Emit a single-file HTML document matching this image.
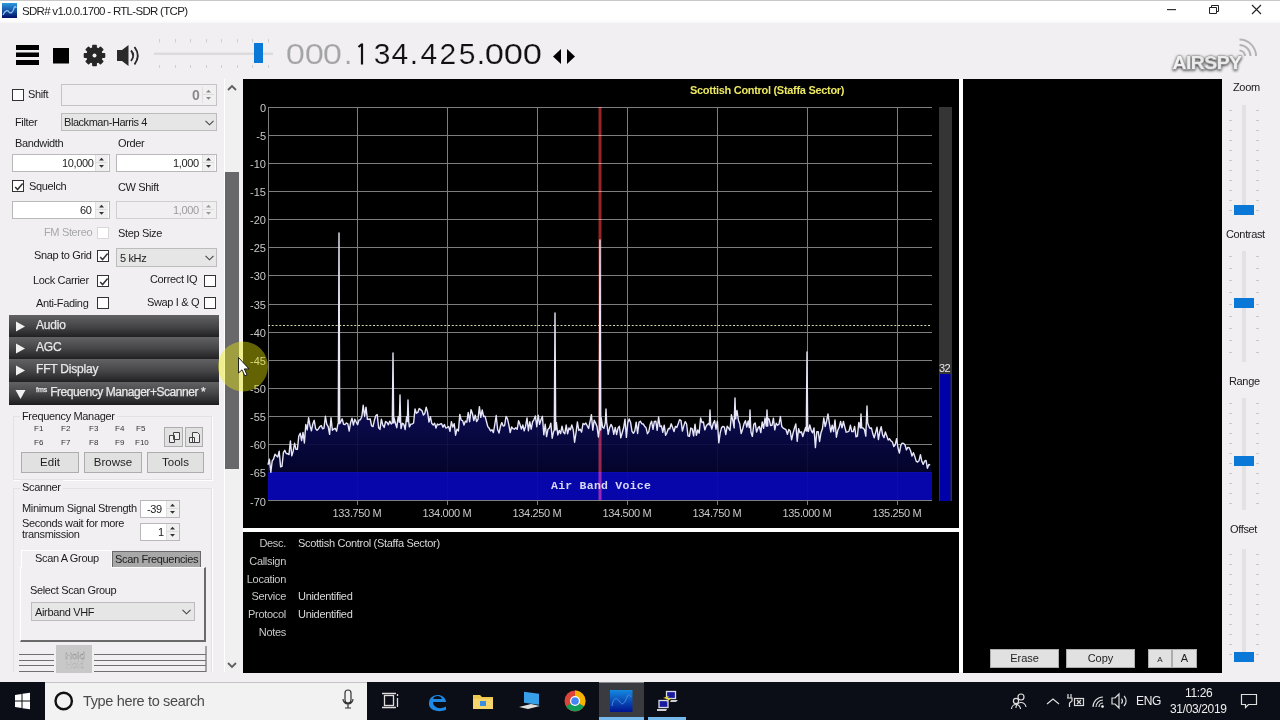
<!DOCTYPE html>
<html><head><meta charset="utf-8">
<style>
*{margin:0;padding:0;box-sizing:border-box}
body{will-change:transform}html,body{width:1280px;height:720px;overflow:hidden;background:#f1eff2;font-family:"Liberation Sans",sans-serif;color:#1e1e1e}
.a{position:absolute}
.t{position:absolute;white-space:nowrap;font-size:11px;line-height:14px;letter-spacing:-0.35px;color:#1c1c1c}
#titlebar{left:0;top:0;width:1280px;height:23px;background:linear-gradient(#fff 85%,#f7f6f8);border-top:1px solid #c9c9c9}
.blk{background:#000}
.chk{position:absolute;width:12px;height:12px;border:1px solid #333;background:#fff}
.num{position:absolute;background:#fff;border:1px solid #b9b9b9}
.combo{position:absolute;background:#e6e6e6;border:1px solid #bcbcbc}
.hdr{position:absolute;left:9px;width:210px;height:23px;background:linear-gradient(#626264,#454547 50%,#2a2a2c 85%,#1c1c1e);color:#e8e8e8;font-size:12px;font-weight:normal;letter-spacing:-0.2px;white-space:nowrap;-webkit-text-stroke:0.25px #e8e8e8}
.btn{position:absolute;background:#e1e1e1;border:1px solid #adadad;text-align:center;font-size:11.5px;line-height:19px}
.lbl{position:absolute;color:#c8c8c8;font-size:11.5px;white-space:nowrap}
</style></head><body>
<div id="titlebar" class="a"></div>
<div class="t" style="left:22px;top:4px;font-size:11.5px;letter-spacing:-0.7px;color:#222">SDR# v1.0.0.1700 - RTL-SDR (TCP)</div>


<!-- toolbar -->
<svg class="a" style="left:0;top:22px" width="600" height="56" viewBox="0 22 600 56">
 <rect x="16" y="45" width="23" height="5" fill="#000"/>
 <rect x="16" y="52.5" width="23" height="4.5" fill="#000"/>
 <rect x="16" y="60" width="23" height="5" fill="#000"/>
 <rect x="53" y="48" width="16" height="15.5" fill="#000"/>
 <g transform="translate(94.5,55.5)" fill="#262626">
  <circle r="8.3"/>
  <rect x="-2.4" y="-10.8" width="4.8" height="21.6" rx="0.8"/>
  <rect x="-2.4" y="-10.8" width="4.8" height="21.6" rx="0.8" transform="rotate(45)"/>
  <rect x="-2.4" y="-10.8" width="4.8" height="21.6" rx="0.8" transform="rotate(90)"/>
  <rect x="-2.4" y="-10.8" width="4.8" height="21.6" rx="0.8" transform="rotate(135)"/>
  <circle r="2" fill="#f1eff2"/>
 </g>
 <path d="M117,50 H122 L128.5,45 V66 L122,61 H117 Z" fill="#2a2a2a"/>
 <path d="M131,50.5 Q135.5,55.5 131,61" fill="none" stroke="#2a2a2a" stroke-width="1.9"/>
 <path d="M134.5,47 Q141,55.5 134.5,64.5" fill="none" stroke="#2a2a2a" stroke-width="1.9"/>
 <rect x="154" y="52.5" width="119" height="2.5" fill="#dcdcdc"/>
 <g stroke="#cfcfcf" stroke-width="1">
  <path d="M159.5,39V42.5 M175.5,39V42.5 M190.5,39V42.5 M206.5,39V42.5 M221.5,39V42.5 M237.5,39V42.5 M252.5,39V42.5 M268.5,39V42.5"/>
  <path d="M159.5,65V68 M175.5,65V68 M190.5,65V68 M206.5,65V68 M221.5,65V68 M237.5,65V68 M252.5,65V68 M268.5,65V68"/>
 </g>
 <rect x="254" y="43" width="9" height="20" fill="#0a78d6"/>
 <path d="M561,49 V64 L553,56.5 Z" fill="#000"/>
 <path d="M567,49 V64 L575,56.5 Z" fill="#000"/>
</svg>
<div class="a" style="left:0;top:0;font-family:'Liberation Sans';font-size:30px;line-height:34px;-webkit-text-stroke:0.2px #f1eff2"><span class="a" style="left:286.0px;top:37px;color:#a4a4a4;transform:scaleX(1.15);transform-origin:1px 0;">0</span><span class="a" style="left:304.6px;top:37px;color:#a4a4a4;transform:scaleX(1.15);transform-origin:1px 0;">0</span><span class="a" style="left:323.4px;top:37px;color:#a4a4a4;transform:scaleX(1.15);transform-origin:1px 0;">0</span><span class="a" style="left:343.9px;top:37px;color:#a4a4a4;">.</span><svg class="a" style="left:355px;top:42px" width="12" height="24"><path d="M7,1.5 V22.5 M7,2 L3.5,5" fill="none" stroke="#111" stroke-width="2.2"/></svg><span class="a" style="left:373.7px;top:37px;color:#111;">3</span><span class="a" style="left:391.5px;top:37px;color:#111;">4</span><span class="a" style="left:409.8px;top:37px;color:#111;">.</span><span class="a" style="left:420.6px;top:37px;color:#111;">4</span><span class="a" style="left:439.6px;top:37px;color:#111;">2</span><span class="a" style="left:458.7px;top:37px;color:#111;">5</span><span class="a" style="left:476.7px;top:37px;color:#111;">.</span><span class="a" style="left:485.0px;top:37px;color:#111;transform:scaleX(1.15);transform-origin:1px 0;">0</span><span class="a" style="left:504.0px;top:37px;color:#111;transform:scaleX(1.15);transform-origin:1px 0;">0</span><span class="a" style="left:522.8px;top:37px;color:#111;transform:scaleX(1.15);transform-origin:1px 0;">0</span></div>

<!-- left panel -->
<div class="chk" style="left:12px;top:89px"></div>
<div class="t" style="left:28px;top:87px">Shift</div>
<div class="num" style="left:61px;top:84px;width:156px;height:22px;background:#f1eff2;border-color:#c4c4c4"></div>
<div class="a" style="left:202px;top:87px;width:13px;height:16px;background:#f0f0f0;border-left:1px solid #e0e0e0"></div><svg class="a" style="left:202px;top:87px" width="13" height="16"><path d="M4,5.5 L6.5,2.8 L9,5.5Z M4,10 L6.5,12.7 L9,10Z" fill="#888"/><path d="M1,7.5H12" stroke="#dcdcdc" stroke-width="1"/></svg>
<div class="t" style="left:192px;top:87px;font-size:14px;line-height:16px;color:#8a8a8a;letter-spacing:0;font-weight:bold">0</div>
<div class="t" style="left:15px;top:115px">Filter</div>
<div class="combo" style="left:61px;top:113px;width:156px;height:18px"></div>
<svg class="a" style="left:205px;top:120px" width="9" height="6"><path d="M0.5,0.8 L4.5,4.8 L8.5,0.8" fill="none" stroke="#444" stroke-width="1.1"/></svg>
<div class="t" style="left:64px;top:115px;letter-spacing:-0.45px">Blackman-Harris 4</div>
<div class="t" style="left:15px;top:136px">Bandwidth</div>
<div class="t" style="left:118px;top:136px">Order</div>
<div class="num" style="left:12px;top:154px;width:98px;height:18px"></div>
<div class="a" style="left:95px;top:155px;width:13px;height:16px;background:#f0f0f0;border-left:1px solid #e0e0e0"></div><svg class="a" style="left:95px;top:155px" width="13" height="16"><path d="M4,5.5 L6.5,2.8 L9,5.5Z M4,10 L6.5,12.7 L9,10Z" fill="#333"/><path d="M1,7.5H12" stroke="#dcdcdc" stroke-width="1"/></svg>
<div class="t" style="left:62px;top:156px">10,000</div>
<div class="num" style="left:116px;top:154px;width:101px;height:18px"></div>
<div class="a" style="left:202px;top:155px;width:13px;height:16px;background:#f0f0f0;border-left:1px solid #e0e0e0"></div><svg class="a" style="left:202px;top:155px" width="13" height="16"><path d="M4,5.5 L6.5,2.8 L9,5.5Z M4,10 L6.5,12.7 L9,10Z" fill="#333"/><path d="M1,7.5H12" stroke="#dcdcdc" stroke-width="1"/></svg>
<div class="t" style="left:173px;top:156px">1,000</div>
<div class="chk" style="left:12px;top:180px"><svg width="12" height="12" class="a" style="left:0;top:0"><path d="M2.2,6 L4.6,8.6 L9.6,2.6" fill="none" stroke="#333" stroke-width="1.5"/></svg></div>
<div class="t" style="left:29px;top:179px">Squelch</div>
<div class="t" style="left:118px;top:180px">CW Shift</div>
<div class="num" style="left:12px;top:201px;width:98px;height:18px"></div>
<div class="a" style="left:95px;top:202px;width:13px;height:16px;background:#f0f0f0;border-left:1px solid #e0e0e0"></div><svg class="a" style="left:95px;top:202px" width="13" height="16"><path d="M4,5.5 L6.5,2.8 L9,5.5Z M4,10 L6.5,12.7 L9,10Z" fill="#333"/><path d="M1,7.5H12" stroke="#dcdcdc" stroke-width="1"/></svg>
<div class="t" style="left:80px;top:203px">60</div>
<div class="num" style="left:116px;top:201px;width:101px;height:18px;background:#f1eff2;border-color:#cfcfcf"></div>
<div class="a" style="left:202px;top:202px;width:13px;height:16px;background:#f0f0f0;border-left:1px solid #e0e0e0"></div><svg class="a" style="left:202px;top:202px" width="13" height="16"><path d="M4,5.5 L6.5,2.8 L9,5.5Z M4,10 L6.5,12.7 L9,10Z" fill="#999"/><path d="M1,7.5H12" stroke="#dcdcdc" stroke-width="1"/></svg>
<div class="t" style="left:173px;top:203px;color:#9c9c9c">1,000</div>
<div class="t" style="left:44px;top:225px;color:#a8a8a8">FM Stereo</div>
<div class="chk" style="left:97px;top:227px;border-color:#d8d8d8"></div>
<div class="t" style="left:118px;top:226px">Step Size</div>
<div class="t" style="left:34px;top:248px">Snap to Grid</div>
<div class="chk" style="left:97px;top:250px"><svg width="12" height="12" class="a" style="left:0;top:0"><path d="M2.2,6 L4.6,8.6 L9.6,2.6" fill="none" stroke="#333" stroke-width="1.5"/></svg></div>
<div class="combo" style="left:116px;top:248px;width:101px;height:19px"></div>
<svg class="a" style="left:205px;top:255px" width="9" height="6"><path d="M0.5,0.8 L4.5,4.8 L8.5,0.8" fill="none" stroke="#444" stroke-width="1.1"/></svg>
<div class="t" style="left:120px;top:251px">5 kHz</div>
<div class="t" style="left:33px;top:273px">Lock Carrier</div>
<div class="chk" style="left:97px;top:275px"><svg width="12" height="12" class="a" style="left:0;top:0"><path d="M2.2,6 L4.6,8.6 L9.6,2.6" fill="none" stroke="#333" stroke-width="1.5"/></svg></div>
<div class="t" style="left:150px;top:272px">Correct IQ</div>
<div class="chk" style="left:204px;top:275px"></div>
<div class="t" style="left:36px;top:296px">Anti-Fading</div>
<div class="chk" style="left:97px;top:297px"></div>
<div class="t" style="left:147px;top:295px">Swap I &amp; Q</div>
<div class="chk" style="left:204px;top:297px"></div>

<div class="hdr" style="top:315px"><svg class="a" style="left:6px;top:6px" width="12" height="12"><path d="M1,0.5 L10,5.5 L1,10.5Z" fill="#f0f0f0"/></svg><span class="a" style="left:27px;top:3px">Audio</span></div>
<div class="hdr" style="top:337px"><svg class="a" style="left:6px;top:6px" width="12" height="12"><path d="M1,0.5 L10,5.5 L1,10.5Z" fill="#f0f0f0"/></svg><span class="a" style="left:27px;top:3px">AGC</span></div>
<div class="hdr" style="top:359px;height:24px"><svg class="a" style="left:6px;top:6px" width="12" height="12"><path d="M1,0.5 L10,5.5 L1,10.5Z" fill="#f0f0f0"/></svg><span class="a" style="left:27px;top:3px">FFT Display</span></div>
<div class="hdr" style="top:382px"><svg class="a" style="left:6px;top:7px" width="12" height="12"><path d="M0.5,1 L10.5,1 L5.5,10Z" fill="#f0f0f0"/></svg><span class="a" style="left:27px;top:3px;letter-spacing:-0.45px"><span style="font-size:7px;vertical-align:4px;letter-spacing:0">fms</span> Frequency Manager+Scanner *</span></div>

<!-- scrollbar -->
<div class="a" style="left:224px;top:79px;width:16px;height:593px;background:#f0f0f0;border-left:1px solid #fff"></div>
<div class="a" style="left:225px;top:172px;width:14px;height:297px;background:#68676a"></div>
<svg class="a" style="left:224px;top:80px" width="16" height="593"><path d="M4,10 L8,6 L12,10" fill="none" stroke="#606060" stroke-width="1.8"/><path d="M4,583 L8,587 L12,583" fill="none" stroke="#606060" stroke-width="1.8"/></svg>

<!-- frequency manager group -->
<div class="a" style="left:13px;top:416px;width:199px;height:64px;border:1px solid #e2e2e2;box-shadow:1px 1px 0 #fff"></div>
<div class="t" style="left:20px;top:409px;background:#f1eff2;padding:0 2px">Frequency Manager</div>
<div class="a" style="font-size:8px;color:#333;left:0;top:0">
<span class="a" style="left:34px;top:424px">F1</span><span class="a" style="left:61px;top:424px">F2</span><span class="a" style="left:89px;top:424px">F3</span><span class="a" style="left:115px;top:424px">F4</span><span class="a" style="left:136px;top:424px">F5</span>
<span class="a" style="left:34px;top:438px">F6</span><span class="a" style="left:61px;top:438px">F7</span><span class="a" style="left:89px;top:438px">F8</span><span class="a" style="left:115px;top:438px">F9</span><span class="a" style="left:135px;top:438px">F10</span>
</div>
<div class="btn" style="left:164px;top:427px;width:19px;height:20px"><svg class="a" style="left:3px;top:3px" width="13" height="13"><path d="M5.5,1.5h6v7h-6z M1.5,4.5h5v7h-5z" fill="#eee" stroke="#444" stroke-width="1"/></svg></div>
<div class="btn" style="left:185px;top:427px;width:18px;height:20px"><svg class="a" style="left:2px;top:3px" width="13" height="13"><path d="M4.5,1.5h5l2,2v8h-7z M1.5,6.5h5v5h-5z" fill="#eee" stroke="#444" stroke-width="1"/></svg></div>
<div class="btn" style="left:21px;top:452px;width:58px;height:21px">Edit</div>
<div class="btn" style="left:84px;top:452px;width:58px;height:21px">Browse</div>
<div class="btn" style="left:147px;top:452px;width:57px;height:21px">Tools</div>
<div class="a" style="left:13px;top:488px;width:199px;height:184px;border:1px solid #e2e2e2;border-bottom:none;box-shadow:1px 0 0 #fff"></div>
<div class="t" style="left:20px;top:480px;background:#f1eff2;padding:0 2px">Scanner</div>
<div class="t" style="left:22px;top:501px">Minimum Signal Strength</div>
<div class="num" style="left:140px;top:500px;width:40px;height:18px"></div>
<div class="a" style="left:166px;top:501px;width:13px;height:16px;background:#f0f0f0;border-left:1px solid #e0e0e0"></div><svg class="a" style="left:166px;top:501px" width="13" height="16"><path d="M4,5.5 L6.5,2.8 L9,5.5Z M4,10 L6.5,12.7 L9,10Z" fill="#333"/><path d="M1,7.5H12" stroke="#dcdcdc" stroke-width="1"/></svg><div class="t" style="left:147px;top:502px">-39</div>
<div class="t" style="left:22px;top:518px;line-height:11px">Seconds wait for more<br>transmission</div>
<div class="num" style="left:140px;top:523px;width:40px;height:18px"></div>
<div class="a" style="left:166px;top:524px;width:13px;height:16px;background:#f0f0f0;border-left:1px solid #e0e0e0"></div><svg class="a" style="left:166px;top:524px" width="13" height="16"><path d="M4,5.5 L6.5,2.8 L9,5.5Z M4,10 L6.5,12.7 L9,10Z" fill="#333"/><path d="M1,7.5H12" stroke="#dcdcdc" stroke-width="1"/></svg><div class="t" style="left:158px;top:525px">1</div>
<div class="a" style="left:20px;top:567px;width:186px;height:75px;border:1px solid #fff;border-right:2px solid #6a6a6a;border-bottom:2px solid #6a6a6a"></div>
<div class="a" style="left:21px;top:550px;width:91px;height:18px;background:#f1eff2;border:1px solid #fff;border-bottom:none"></div>
<div class="t" style="left:35px;top:551px">Scan A Group</div>
<div class="a" style="left:112px;top:551px;width:89px;height:16px;background:#a8a8a8;border:1px solid #6a6a6a;border-bottom:none"></div>
<div class="t" style="left:115px;top:552px">Scan Frequencies</div>
<div class="t" style="left:30px;top:583px">Select Scan Group</div>
<div class="combo" style="left:31px;top:602px;width:164px;height:19px"></div>
<svg class="a" style="left:182px;top:609px" width="9" height="6"><path d="M0.5,0.8 L4.5,4.8 L8.5,0.8" fill="none" stroke="#444" stroke-width="1.1"/></svg><div class="t" style="left:35px;top:605px">Airband VHF</div>
<svg class="a" style="left:0;top:640px" width="224" height="40" viewBox="0 640 224 40">
 <g stroke="#707070" stroke-width="1.2">
 <path d="M19,654.5H54 M19,660.5H54 M19,665.5H54 M19,671.5H54"/>
 <path d="M94,654.5H206 M94,660.5H206 M94,665.5H206 M94,671.5H206"/>
 <path d="M206,646V672"/>
 </g>
 <rect x="56" y="645" width="36" height="28" fill="#c8c8c8"/>
 <text x="75" y="658.5" font-size="9.5" fill="#f2f2f2" stroke="#8c8c8c" stroke-width="0.45" text-anchor="middle" font-family="Liberation Sans">Hold</text><text x="75" y="667.5" font-size="9" fill="#e6e6e6" stroke="#9a9a9a" stroke-width="0.3" text-anchor="middle" font-family="Liberation Sans" opacity="0.7">Hold</text>
</svg>

<!-- panels -->
<div class="a blk" style="left:243px;top:79px;width:716px;height:449px"></div>
<div class="a" style="left:959px;top:79px;width:4px;height:593px;background:#fff"></div>
<div class="a" style="left:243px;top:528px;width:716px;height:4px;background:#fff"></div>
<div class="a blk" style="left:243px;top:532px;width:716px;height:141px"></div>
<div class="a blk" style="left:963px;top:79px;width:259px;height:594px"></div>

<!-- spectrum svg -->
<svg class="a" style="left:0;top:0" width="1280" height="720" viewBox="0 0 1280 720">
 <defs><linearGradient id="fg" x1="0" y1="400" x2="0" y2="472" gradientUnits="userSpaceOnUse"><stop offset="0" stop-color="#0e0e60"/><stop offset="1" stop-color="#04042e"/></linearGradient></defs>
 <g stroke="#7e7e7e" stroke-width="1" shape-rendering="crispEdges">
  <path d="M268,107.5H932 M268,135.5H932 M268,163.5H932 M268,191.5H932 M268,219.5H932 M268,247.5H932 M268,275.5H932 M268,304.5H932 M268,332.5H932 M268,360.5H932 M268,388.5H932 M268,416.5H932 M268,444.5H932 M268,472.5H932 M268,500.5H932"/>
  <path d="M268.5,107V500 M357.5,107V505 M447.5,107V505 M537.5,107V505 M627.5,107V505 M717.5,107V505 M807.5,107V505 M897.5,107V505"/>
 </g>
 <path d="M268,472 L268.0,464.7 L269.4,459.3 L270.8,472.3 L272.2,461.0 L273.6,458.8 L275.0,454.2 L276.4,455.7 L277.8,457.0 L279.2,451.2 L280.6,466.9 L282.0,466.4 L283.4,452.5 L284.8,450.3 L286.2,453.6 L287.6,453.7 L289.0,454.6 L290.4,441.0 L291.8,455.9 L293.2,451.0 L294.6,443.3 L296.0,449.3 L297.4,449.4 L298.8,436.0 L300.2,433.2 L301.6,440.6 L303.0,432.4 L304.4,443.0 L305.8,424.4 L307.2,429.8 L308.6,417.6 L310.0,425.6 L311.4,430.9 L312.8,424.0 L314.2,420.3 L315.6,428.6 L317.0,430.3 L318.4,428.9 L319.8,426.6 L321.2,425.6 L322.6,428.8 L324.0,428.1 L325.4,416.3 L326.8,424.3 L328.2,426.7 L329.6,434.4 L331.0,417.7 L332.4,430.3 L333.8,429.0 L335.2,428.3 L336.6,431.2 L338.0,423.7 L338.3,423.8 L339.0,233.0 L339.7,423.8 L340.8,421.7 L342.2,418.8 L343.6,424.3 L345.0,424.6 L346.4,423.0 L347.8,423.8 L349.2,431.0 L350.6,422.6 L352.0,418.1 L353.4,425.1 L354.8,419.3 L356.2,422.0 L357.6,424.7 L359.0,419.9 L360.4,419.7 L361.8,416.8 L363.2,405.3 L364.6,416.5 L366.0,407.2 L367.4,419.4 L368.8,419.2 L370.2,419.0 L371.6,425.9 L373.0,426.6 L374.4,420.3 L375.8,415.8 L377.2,414.6 L378.6,427.8 L380.0,429.4 L381.4,419.2 L382.8,425.1 L384.2,427.4 L385.6,421.5 L387.0,422.4 L388.4,424.8 L389.8,421.1 L391.2,424.0 L392.3,422.9 L393.0,353.0 L393.7,422.9 L394.0,417.6 L395.4,423.3 L396.8,427.7 L398.2,416.5 L399.3,422.2 L400.0,395.0 L400.7,422.2 L401.0,428.5 L402.4,423.3 L403.8,424.1 L405.2,429.5 L406.6,416.8 L407.3,421.5 L408.0,400.0 L408.7,421.5 L409.4,426.9 L410.8,424.1 L412.2,424.0 L413.6,423.0 L415.0,409.0 L416.4,413.2 L417.8,412.4 L419.2,408.5 L420.6,409.6 L422.0,410.8 L423.4,415.0 L424.8,413.5 L426.2,407.1 L427.6,412.4 L429.0,422.1 L430.4,416.7 L431.8,423.6 L433.2,425.1 L434.6,423.2 L436.0,428.0 L437.4,424.0 L438.8,424.9 L440.2,424.0 L441.6,423.8 L443.0,427.2 L444.4,424.6 L445.8,428.0 L447.2,427.6 L448.6,426.5 L450.0,431.3 L451.4,421.7 L452.8,427.0 L454.2,423.7 L455.6,435.2 L457.0,429.1 L458.4,430.9 L459.8,414.4 L461.2,420.1 L462.6,420.6 L464.0,425.0 L465.4,421.1 L466.8,422.1 L468.2,412.5 L469.6,421.7 L471.0,409.6 L472.4,413.4 L473.8,420.6 L475.2,415.1 L476.6,421.5 L478.0,419.4 L479.4,406.7 L480.8,417.3 L482.2,410.0 L483.6,416.5 L485.0,416.1 L486.4,421.2 L487.8,426.6 L489.2,428.3 L490.6,430.9 L492.0,429.7 L493.4,432.6 L494.8,424.4 L496.2,415.5 L497.6,429.6 L499.0,433.0 L500.4,426.6 L501.8,422.6 L503.2,426.0 L504.6,425.6 L506.0,416.5 L507.4,418.7 L508.8,424.7 L510.2,432.6 L511.6,427.0 L513.0,428.7 L514.4,429.2 L515.8,427.7 L517.2,429.3 L518.6,420.7 L520.0,424.6 L521.4,429.1 L522.8,425.0 L524.2,430.8 L525.6,426.2 L527.0,417.9 L528.4,430.7 L529.8,421.8 L531.2,429.2 L532.6,421.9 L534.0,419.6 L535.4,416.0 L536.8,426.7 L538.2,415.1 L539.6,424.3 L541.0,419.8 L542.4,416.3 L543.8,434.8 L545.2,424.3 L546.6,436.6 L548.0,429.2 L549.4,427.9 L550.8,423.1 L552.2,438.2 L553.6,431.6 L554.3,430.0 L555.0,313.0 L555.7,430.0 L556.4,422.7 L557.8,435.0 L559.2,430.4 L560.6,433.6 L562.0,426.2 L563.4,432.3 L564.8,433.8 L566.2,425.0 L567.6,433.9 L569.0,428.0 L570.4,429.8 L571.8,424.9 L573.2,429.6 L574.6,442.2 L576.0,432.8 L577.4,421.9 L578.8,430.5 L580.2,429.3 L581.6,432.1 L583.0,423.5 L584.4,424.5 L585.8,423.1 L587.2,425.8 L588.6,428.5 L590.0,421.6 L591.4,414.6 L592.8,430.1 L594.2,420.2 L595.6,423.0 L597.0,426.6 L598.4,437.0 L599.3,430.0 L600.0,240.0 L600.7,430.0 L601.2,417.7 L602.6,427.1 L604.0,428.2 L605.3,423.0 L606.0,409.0 L606.7,423.0 L606.8,422.9 L608.2,434.3 L609.6,427.8 L611.0,424.4 L612.4,427.1 L613.8,434.4 L615.2,427.4 L616.6,434.5 L618.0,428.1 L619.4,426.3 L620.8,437.8 L622.2,432.9 L623.6,428.0 L625.0,419.1 L626.4,437.4 L627.8,422.6 L629.2,419.0 L630.6,422.6 L632.0,431.3 L633.4,433.3 L634.8,430.8 L636.2,422.2 L637.6,433.5 L639.0,422.4 L640.4,421.3 L641.8,423.7 L643.2,424.0 L644.6,426.2 L646.0,427.7 L647.4,433.7 L648.8,431.6 L650.2,424.3 L651.6,421.3 L653.0,429.4 L654.4,421.4 L655.8,421.2 L657.2,430.3 L658.6,416.9 L660.0,426.6 L661.4,425.9 L662.8,432.3 L664.2,425.2 L665.6,435.3 L667.0,432.6 L668.4,428.5 L669.8,428.8 L671.2,423.8 L672.6,427.6 L674.0,431.5 L675.4,426.4 L676.8,427.5 L678.2,423.8 L679.6,419.6 L681.0,420.6 L682.4,431.1 L683.8,425.9 L685.2,421.6 L686.6,424.0 L688.0,435.9 L689.4,436.3 L690.8,428.0 L692.2,428.8 L693.6,435.9 L695.0,424.2 L696.4,435.3 L697.8,430.0 L699.2,433.1 L700.6,417.9 L702.0,422.5 L703.4,421.9 L704.8,429.9 L706.2,426.0 L707.6,424.2 L709.0,423.2 L709.3,425.0 L710.0,410.0 L710.7,425.0 L711.8,429.0 L713.2,423.5 L714.6,420.6 L716.0,429.2 L717.4,421.2 L718.8,442.8 L720.2,432.9 L721.6,427.6 L723.0,426.4 L724.4,427.2 L725.8,434.5 L727.2,426.1 L728.6,428.2 L730.0,430.4 L731.4,414.8 L732.8,420.3 L734.2,427.9 L734.3,419.0 L735.0,398.0 L735.7,419.0 L737.0,410.5 L738.4,420.2 L739.8,424.0 L741.2,433.6 L742.6,429.3 L744.0,423.8 L745.4,420.7 L746.8,427.1 L748.2,421.0 L749.3,427.6 L750.0,410.0 L750.7,427.6 L751.0,432.3 L752.4,436.4 L753.8,424.3 L755.2,423.0 L756.6,432.1 L758.0,428.1 L759.4,426.6 L760.8,432.6 L762.2,422.0 L763.6,428.3 L765.0,418.0 L766.3,426.1 L767.0,410.0 L767.7,426.1 L767.8,418.0 L769.2,419.3 L770.6,425.6 L772.0,425.3 L773.4,418.1 L774.8,429.8 L776.2,423.3 L777.6,425.2 L779.0,424.2 L780.4,416.5 L781.8,426.6 L783.2,428.1 L784.6,428.9 L786.0,429.7 L787.4,434.3 L788.8,429.5 L790.2,431.0 L791.6,439.9 L793.0,433.4 L794.4,428.2 L795.8,423.9 L797.2,441.3 L798.6,428.6 L800.0,432.8 L801.4,431.8 L802.8,436.5 L804.2,431.7 L805.6,427.5 L806.3,431.0 L807.0,352.0 L807.7,431.0 L808.4,431.4 L809.8,425.0 L811.2,430.4 L812.6,432.8 L814.0,427.9 L815.4,447.6 L816.8,431.8 L818.2,431.6 L819.6,441.5 L821.0,432.7 L822.4,428.8 L823.8,418.0 L825.2,426.6 L826.6,421.0 L828.0,414.0 L829.4,423.5 L830.8,432.0 L832.2,425.2 L833.6,431.6 L835.0,420.0 L836.4,437.2 L837.8,430.3 L839.2,427.3 L840.6,421.4 L842.0,427.9 L843.4,421.5 L844.8,427.1 L846.2,432.2 L847.6,431.8 L849.0,431.2 L850.4,425.3 L851.8,431.6 L853.2,431.6 L854.6,426.4 L856.0,436.9 L857.4,436.1 L858.8,422.5 L860.2,427.8 L860.3,427.9 L861.0,414.0 L861.7,427.9 L863.0,428.0 L864.4,429.4 L865.8,436.1 L866.3,423.0 L867.0,406.0 L867.7,423.0 L868.6,425.6 L870.0,428.5 L871.4,427.9 L872.8,433.8 L874.2,437.8 L875.6,432.6 L877.0,427.2 L878.4,439.5 L879.8,431.8 L881.2,426.6 L882.6,434.9 L884.0,437.7 L885.4,431.9 L886.8,436.0 L888.2,440.1 L889.6,438.8 L891.0,441.0 L892.4,442.0 L893.8,446.6 L895.2,444.8 L896.6,438.6 L898.0,448.0 L899.4,453.1 L900.8,445.3 L902.2,443.1 L903.6,443.4 L905.0,444.7 L906.4,449.9 L907.8,447.4 L909.2,447.7 L910.6,450.7 L912.0,456.0 L913.4,452.7 L914.8,456.6 L916.2,461.1 L917.6,462.1 L919.0,460.8 L920.4,454.6 L921.8,461.3 L923.2,464.4 L924.6,461.2 L926.0,460.4 L927.4,468.2 L928.8,464.5 L930.2,465.1 L931.5,472 Z" fill="url(#fg)" fill-opacity="0.92"/>
 <rect x="268" y="472" width="664" height="28" fill="#0606b2" fill-opacity="0.96"/>
 <path d="M268,325.5H930" stroke="#d4d4a8" stroke-width="1.2" stroke-dasharray="2,1.75"/>
 <rect x="598.5" y="107" width="3" height="393" fill="rgb(150,36,36)" style="mix-blend-mode:screen"/>
 <path d="M268.0,464.7 L269.4,459.3 L270.8,472.3 L272.2,461.0 L273.6,458.8 L275.0,454.2 L276.4,455.7 L277.8,457.0 L279.2,451.2 L280.6,466.9 L282.0,466.4 L283.4,452.5 L284.8,450.3 L286.2,453.6 L287.6,453.7 L289.0,454.6 L290.4,441.0 L291.8,455.9 L293.2,451.0 L294.6,443.3 L296.0,449.3 L297.4,449.4 L298.8,436.0 L300.2,433.2 L301.6,440.6 L303.0,432.4 L304.4,443.0 L305.8,424.4 L307.2,429.8 L308.6,417.6 L310.0,425.6 L311.4,430.9 L312.8,424.0 L314.2,420.3 L315.6,428.6 L317.0,430.3 L318.4,428.9 L319.8,426.6 L321.2,425.6 L322.6,428.8 L324.0,428.1 L325.4,416.3 L326.8,424.3 L328.2,426.7 L329.6,434.4 L331.0,417.7 L332.4,430.3 L333.8,429.0 L335.2,428.3 L336.6,431.2 L338.0,423.7 L338.3,423.8 L339.0,233.0 L339.7,423.8 L340.8,421.7 L342.2,418.8 L343.6,424.3 L345.0,424.6 L346.4,423.0 L347.8,423.8 L349.2,431.0 L350.6,422.6 L352.0,418.1 L353.4,425.1 L354.8,419.3 L356.2,422.0 L357.6,424.7 L359.0,419.9 L360.4,419.7 L361.8,416.8 L363.2,405.3 L364.6,416.5 L366.0,407.2 L367.4,419.4 L368.8,419.2 L370.2,419.0 L371.6,425.9 L373.0,426.6 L374.4,420.3 L375.8,415.8 L377.2,414.6 L378.6,427.8 L380.0,429.4 L381.4,419.2 L382.8,425.1 L384.2,427.4 L385.6,421.5 L387.0,422.4 L388.4,424.8 L389.8,421.1 L391.2,424.0 L392.3,422.9 L393.0,353.0 L393.7,422.9 L394.0,417.6 L395.4,423.3 L396.8,427.7 L398.2,416.5 L399.3,422.2 L400.0,395.0 L400.7,422.2 L401.0,428.5 L402.4,423.3 L403.8,424.1 L405.2,429.5 L406.6,416.8 L407.3,421.5 L408.0,400.0 L408.7,421.5 L409.4,426.9 L410.8,424.1 L412.2,424.0 L413.6,423.0 L415.0,409.0 L416.4,413.2 L417.8,412.4 L419.2,408.5 L420.6,409.6 L422.0,410.8 L423.4,415.0 L424.8,413.5 L426.2,407.1 L427.6,412.4 L429.0,422.1 L430.4,416.7 L431.8,423.6 L433.2,425.1 L434.6,423.2 L436.0,428.0 L437.4,424.0 L438.8,424.9 L440.2,424.0 L441.6,423.8 L443.0,427.2 L444.4,424.6 L445.8,428.0 L447.2,427.6 L448.6,426.5 L450.0,431.3 L451.4,421.7 L452.8,427.0 L454.2,423.7 L455.6,435.2 L457.0,429.1 L458.4,430.9 L459.8,414.4 L461.2,420.1 L462.6,420.6 L464.0,425.0 L465.4,421.1 L466.8,422.1 L468.2,412.5 L469.6,421.7 L471.0,409.6 L472.4,413.4 L473.8,420.6 L475.2,415.1 L476.6,421.5 L478.0,419.4 L479.4,406.7 L480.8,417.3 L482.2,410.0 L483.6,416.5 L485.0,416.1 L486.4,421.2 L487.8,426.6 L489.2,428.3 L490.6,430.9 L492.0,429.7 L493.4,432.6 L494.8,424.4 L496.2,415.5 L497.6,429.6 L499.0,433.0 L500.4,426.6 L501.8,422.6 L503.2,426.0 L504.6,425.6 L506.0,416.5 L507.4,418.7 L508.8,424.7 L510.2,432.6 L511.6,427.0 L513.0,428.7 L514.4,429.2 L515.8,427.7 L517.2,429.3 L518.6,420.7 L520.0,424.6 L521.4,429.1 L522.8,425.0 L524.2,430.8 L525.6,426.2 L527.0,417.9 L528.4,430.7 L529.8,421.8 L531.2,429.2 L532.6,421.9 L534.0,419.6 L535.4,416.0 L536.8,426.7 L538.2,415.1 L539.6,424.3 L541.0,419.8 L542.4,416.3 L543.8,434.8 L545.2,424.3 L546.6,436.6 L548.0,429.2 L549.4,427.9 L550.8,423.1 L552.2,438.2 L553.6,431.6 L554.3,430.0 L555.0,313.0 L555.7,430.0 L556.4,422.7 L557.8,435.0 L559.2,430.4 L560.6,433.6 L562.0,426.2 L563.4,432.3 L564.8,433.8 L566.2,425.0 L567.6,433.9 L569.0,428.0 L570.4,429.8 L571.8,424.9 L573.2,429.6 L574.6,442.2 L576.0,432.8 L577.4,421.9 L578.8,430.5 L580.2,429.3 L581.6,432.1 L583.0,423.5 L584.4,424.5 L585.8,423.1 L587.2,425.8 L588.6,428.5 L590.0,421.6 L591.4,414.6 L592.8,430.1 L594.2,420.2 L595.6,423.0 L597.0,426.6 L598.4,437.0 L599.3,430.0 L600.0,240.0 L600.7,430.0 L601.2,417.7 L602.6,427.1 L604.0,428.2 L605.3,423.0 L606.0,409.0 L606.7,423.0 L606.8,422.9 L608.2,434.3 L609.6,427.8 L611.0,424.4 L612.4,427.1 L613.8,434.4 L615.2,427.4 L616.6,434.5 L618.0,428.1 L619.4,426.3 L620.8,437.8 L622.2,432.9 L623.6,428.0 L625.0,419.1 L626.4,437.4 L627.8,422.6 L629.2,419.0 L630.6,422.6 L632.0,431.3 L633.4,433.3 L634.8,430.8 L636.2,422.2 L637.6,433.5 L639.0,422.4 L640.4,421.3 L641.8,423.7 L643.2,424.0 L644.6,426.2 L646.0,427.7 L647.4,433.7 L648.8,431.6 L650.2,424.3 L651.6,421.3 L653.0,429.4 L654.4,421.4 L655.8,421.2 L657.2,430.3 L658.6,416.9 L660.0,426.6 L661.4,425.9 L662.8,432.3 L664.2,425.2 L665.6,435.3 L667.0,432.6 L668.4,428.5 L669.8,428.8 L671.2,423.8 L672.6,427.6 L674.0,431.5 L675.4,426.4 L676.8,427.5 L678.2,423.8 L679.6,419.6 L681.0,420.6 L682.4,431.1 L683.8,425.9 L685.2,421.6 L686.6,424.0 L688.0,435.9 L689.4,436.3 L690.8,428.0 L692.2,428.8 L693.6,435.9 L695.0,424.2 L696.4,435.3 L697.8,430.0 L699.2,433.1 L700.6,417.9 L702.0,422.5 L703.4,421.9 L704.8,429.9 L706.2,426.0 L707.6,424.2 L709.0,423.2 L709.3,425.0 L710.0,410.0 L710.7,425.0 L711.8,429.0 L713.2,423.5 L714.6,420.6 L716.0,429.2 L717.4,421.2 L718.8,442.8 L720.2,432.9 L721.6,427.6 L723.0,426.4 L724.4,427.2 L725.8,434.5 L727.2,426.1 L728.6,428.2 L730.0,430.4 L731.4,414.8 L732.8,420.3 L734.2,427.9 L734.3,419.0 L735.0,398.0 L735.7,419.0 L737.0,410.5 L738.4,420.2 L739.8,424.0 L741.2,433.6 L742.6,429.3 L744.0,423.8 L745.4,420.7 L746.8,427.1 L748.2,421.0 L749.3,427.6 L750.0,410.0 L750.7,427.6 L751.0,432.3 L752.4,436.4 L753.8,424.3 L755.2,423.0 L756.6,432.1 L758.0,428.1 L759.4,426.6 L760.8,432.6 L762.2,422.0 L763.6,428.3 L765.0,418.0 L766.3,426.1 L767.0,410.0 L767.7,426.1 L767.8,418.0 L769.2,419.3 L770.6,425.6 L772.0,425.3 L773.4,418.1 L774.8,429.8 L776.2,423.3 L777.6,425.2 L779.0,424.2 L780.4,416.5 L781.8,426.6 L783.2,428.1 L784.6,428.9 L786.0,429.7 L787.4,434.3 L788.8,429.5 L790.2,431.0 L791.6,439.9 L793.0,433.4 L794.4,428.2 L795.8,423.9 L797.2,441.3 L798.6,428.6 L800.0,432.8 L801.4,431.8 L802.8,436.5 L804.2,431.7 L805.6,427.5 L806.3,431.0 L807.0,352.0 L807.7,431.0 L808.4,431.4 L809.8,425.0 L811.2,430.4 L812.6,432.8 L814.0,427.9 L815.4,447.6 L816.8,431.8 L818.2,431.6 L819.6,441.5 L821.0,432.7 L822.4,428.8 L823.8,418.0 L825.2,426.6 L826.6,421.0 L828.0,414.0 L829.4,423.5 L830.8,432.0 L832.2,425.2 L833.6,431.6 L835.0,420.0 L836.4,437.2 L837.8,430.3 L839.2,427.3 L840.6,421.4 L842.0,427.9 L843.4,421.5 L844.8,427.1 L846.2,432.2 L847.6,431.8 L849.0,431.2 L850.4,425.3 L851.8,431.6 L853.2,431.6 L854.6,426.4 L856.0,436.9 L857.4,436.1 L858.8,422.5 L860.2,427.8 L860.3,427.9 L861.0,414.0 L861.7,427.9 L863.0,428.0 L864.4,429.4 L865.8,436.1 L866.3,423.0 L867.0,406.0 L867.7,423.0 L868.6,425.6 L870.0,428.5 L871.4,427.9 L872.8,433.8 L874.2,437.8 L875.6,432.6 L877.0,427.2 L878.4,439.5 L879.8,431.8 L881.2,426.6 L882.6,434.9 L884.0,437.7 L885.4,431.9 L886.8,436.0 L888.2,440.1 L889.6,438.8 L891.0,441.0 L892.4,442.0 L893.8,446.6 L895.2,444.8 L896.6,438.6 L898.0,448.0 L899.4,453.1 L900.8,445.3 L902.2,443.1 L903.6,443.4 L905.0,444.7 L906.4,449.9 L907.8,447.4 L909.2,447.7 L910.6,450.7 L912.0,456.0 L913.4,452.7 L914.8,456.6 L916.2,461.1 L917.6,462.1 L919.0,460.8 L920.4,454.6 L921.8,461.3 L923.2,464.4 L924.6,461.2 L926.0,460.4 L927.4,468.2 L928.8,464.5 L930.2,465.1" fill="none" stroke="#e6e6f8" stroke-width="1.4" stroke-linejoin="round"/>
  <rect x="939" y="107" width="13" height="394" fill="#353535"/>
 <rect x="940" y="374" width="10.5" height="127" fill="#0000a8"/>
</svg>
<div class="t" style="left:690px;top:83px;color:#ece860;font-weight:bold;font-size:11px;letter-spacing:-0.3px">Scottish Control (Staffa Sector)</div>
<div class="t" style="left:551px;top:479px;color:#d8d8f4;font-family:'Liberation Mono',monospace;font-weight:bold;font-size:11.5px;letter-spacing:0.25px">Air Band Voice</div>
<div class="t" style="left:939px;top:361px;color:#e8e8e8;font-size:11px;letter-spacing:-0.5px">32</div>

<!-- dB labels -->
<div class="a" style="left:243px;top:0;width:23px;font-size:11px;color:#c8c8c8;text-align:right">
<div class="a" style="right:0;top:102px">0</div>
<div class="a" style="right:0;top:130px">-5</div>
<div class="a" style="right:0;top:158px">-10</div>
<div class="a" style="right:0;top:186px">-15</div>
<div class="a" style="right:0;top:214px">-20</div>
<div class="a" style="right:0;top:242px">-25</div>
<div class="a" style="right:0;top:270px">-30</div>
<div class="a" style="right:0;top:299px">-35</div>
<div class="a" style="right:0;top:327px">-40</div>
<div class="a" style="right:0;top:355px">-45</div>
<div class="a" style="right:0;top:383px">-50</div>
<div class="a" style="right:0;top:411px">-55</div>
<div class="a" style="right:0;top:439px">-60</div>
<div class="a" style="right:0;top:467px">-65</div>
<div class="a" style="right:0;top:496px">-70</div>
</div>
<div class="a" style="left:0;top:507px;font-size:11px;color:#c8c8c8;letter-spacing:-0.35px">
<div class="a" style="left:317px;width:80px;text-align:center">133.750 M</div>
<div class="a" style="left:407px;width:80px;text-align:center">134.000 M</div>
<div class="a" style="left:497px;width:80px;text-align:center">134.250 M</div>
<div class="a" style="left:587px;width:80px;text-align:center">134.500 M</div>
<div class="a" style="left:677px;width:80px;text-align:center">134.750 M</div>
<div class="a" style="left:767px;width:80px;text-align:center">135.000 M</div>
<div class="a" style="left:857px;width:80px;text-align:center">135.250 M</div>
</div>
<!-- info panel -->
<div class="a" style="left:243px;top:535px;width:43px;font-size:11px;color:#c8c8c8;text-align:right;line-height:17.8px;letter-spacing:-0.3px">Desc.<br>Callsign<br>Location<br>Service<br>Protocol<br>Notes</div>
<div class="a" style="left:298px;top:535px;font-size:11px;color:#d8d8d8;line-height:17.8px;white-space:nowrap;letter-spacing:-0.3px">Scottish Control (Staffa Sector)<br>&nbsp;<br>&nbsp;<br>Unidentified<br>Unidentified</div>

<!-- cursor highlight -->
<svg class="a" style="left:200px;top:320px" width="100" height="100" viewBox="200 320 100 100">
 <circle cx="243" cy="366.5" r="25" fill="rgb(235,235,10)" fill-opacity="0.42"/>
 <path d="M238.5,357.5 V373 L242,369.8 L244.8,375.8 L247,374.8 L244.3,368.9 H249 Z" fill="#fff" stroke="#111" stroke-width="0.9" stroke-linejoin="round"/>
</svg>
<!-- window controls -->
<svg class="a" style="left:1150px;top:0" width="130" height="22" viewBox="1150 0 130 22">
 <rect x="1167" y="9" width="9" height="1.2" fill="#333"/>
 <path d="M1209.5,7.5h7v6h-7z M1211.5,7.5V5.5h7v6h-2" fill="none" stroke="#222" stroke-width="1"/>
 <path d="M1252,5 L1261,14 M1261,5 L1252,14" stroke="#222" stroke-width="1.1"/>
</svg>
<!-- app icon -->
<svg class="a" style="left:2px;top:3px" width="15" height="15" viewBox="0 0 15 15">
 <defs><linearGradient id="ig" x1="0" y1="0" x2="0" y2="1"><stop offset="0" stop-color="#2a9ae0"/><stop offset="1" stop-color="#00106a"/></linearGradient></defs>
 <rect width="15" height="15" fill="url(#ig)"/>
 <path d="M1,12 C3,7 6,7 7,9 C8,11 11,10 12,5 C12.5,3 14,3 14,5" fill="none" stroke="#9cc8f4" stroke-width="1.2"/>
</svg>
<!-- AIRSPY logo -->
<svg class="a" style="left:1160px;top:30px" width="110" height="50" viewBox="1160 30 110 50">
 <defs>
  <filter id="sh" x="-20%" y="-40%" width="140%" height="180%"><feGaussianBlur in="SourceAlpha" stdDeviation="1.6"/><feOffset dx="0" dy="0.5"/><feComponentTransfer><feFuncA type="linear" slope="0.9"/></feComponentTransfer><feMerge><feMergeNode/><feMergeNode in="SourceGraphic"/></feMerge></filter>
  <linearGradient id="lg" x1="0" y1="0" x2="1" y2="0"><stop offset="0" stop-color="#f4f4f4"/><stop offset="0.5" stop-color="#e6e6e6"/><stop offset="1" stop-color="#f2f2f2"/></linearGradient>
 </defs>
 <g fill="none" stroke="#b4b4b6" stroke-width="2">
   <path d="M1239.5,50.5 A5.5,5.5 0 0 1 1245,56"/>
   <path d="M1239.5,45 A11,11 0 0 1 1250.5,56"/>
   <path d="M1239.5,39.5 A16.5,16.5 0 0 1 1256,56"/>
 </g>
 <g filter="url(#sh)">

  <text x="1172.5" y="68.5" font-family="Liberation Sans" font-weight="bold" font-size="19" fill="url(#lg)" stroke="#9a9a9a" stroke-width="0.9" paint-order="stroke" letter-spacing="-0.5" textLength="69" lengthAdjust="spacingAndGlyphs">AIRSPY</text>
 </g>
</svg>
<!-- right slider column -->
<div class="t" style="left:1233px;top:80px;font-size:11px">Zoom</div>
<div class="t" style="left:1226px;top:227px;font-size:11px">Contrast</div>
<div class="t" style="left:1229px;top:374px;font-size:11px">Range</div>
<div class="t" style="left:1230px;top:522px;font-size:11px">Offset</div>
<svg class="a" style="left:1222px;top:79px" width="58" height="600" viewBox="1222 79 58 600">
 <g fill="#e2e2e2">
  <rect x="1242" y="105" width="4" height="106"/>
  <rect x="1242" y="251" width="4" height="111"/>
  <rect x="1242" y="398" width="4" height="112"/>
  <rect x="1242" y="549" width="4" height="110"/>
 </g>
 <g stroke="#c8c8c8" stroke-width="1">
  <path d="M1229,110.5h3 M1229,120.5h3 M1229,130.5h3 M1229,140.5h3 M1229,150.5h3 M1229,160.5h3 M1229,170.5h3 M1229,180.5h3 M1229,190.5h3 M1229,200.5h3 M1229,210.5h3"/>
  <path d="M1256,110.5h3 M1256,120.5h3 M1256,130.5h3 M1256,140.5h3 M1256,150.5h3 M1256,160.5h3 M1256,170.5h3 M1256,180.5h3 M1256,190.5h3 M1256,200.5h3 M1256,210.5h3"/>
  <path d="M1229,256.5h3 M1229,268.5h3 M1229,280.5h3 M1229,292.5h3 M1229,304.5h3 M1229,316.5h3 M1229,328.5h3 M1229,340.5h3 M1229,352.5h3"/>
  <path d="M1256,256.5h3 M1256,268.5h3 M1256,280.5h3 M1256,292.5h3 M1256,304.5h3 M1256,316.5h3 M1256,328.5h3 M1256,340.5h3 M1256,352.5h3"/>
  <path d="M1229,403.5h3 M1229,413.5h3 M1229,423.5h3 M1229,433.5h3 M1229,443.5h3 M1229,453.5h3 M1229,463.5h3 M1229,473.5h3 M1229,483.5h3 M1229,493.5h3 M1229,503.5h3"/>
  <path d="M1256,403.5h3 M1256,413.5h3 M1256,423.5h3 M1256,433.5h3 M1256,443.5h3 M1256,453.5h3 M1256,463.5h3 M1256,473.5h3 M1256,483.5h3 M1256,493.5h3 M1256,503.5h3"/>
  <path d="M1229,554.5h3 M1229,564.5h3 M1229,574.5h3 M1229,584.5h3 M1229,594.5h3 M1229,604.5h3 M1229,614.5h3 M1229,624.5h3 M1229,634.5h3 M1229,644.5h3 M1229,654.5h3"/>
  <path d="M1256,554.5h3 M1256,564.5h3 M1256,574.5h3 M1256,584.5h3 M1256,594.5h3 M1256,604.5h3 M1256,614.5h3 M1256,624.5h3 M1256,634.5h3 M1256,644.5h3 M1256,654.5h3"/>
 </g>
 <g fill="#0a78d6">
  <rect x="1234" y="205" width="20" height="10"/>
  <rect x="1234" y="298" width="20" height="10"/>
  <rect x="1234" y="456" width="20" height="10"/>
  <rect x="1234" y="652" width="20" height="10"/>
 </g>
</svg>
<!-- erase/copy buttons -->
<div class="btn" style="left:990px;top:649px;width:69px;height:19px;line-height:17px;font-size:11px">Erase</div>
<div class="btn" style="left:1066px;top:649px;width:69px;height:19px;line-height:17px;font-size:11px">Copy</div>
<div class="btn" style="left:1148px;top:649px;width:24px;height:19px;line-height:19px;font-size:8px">A</div>
<div class="btn" style="left:1172px;top:649px;width:25px;height:19px;line-height:17px;font-size:11px">A</div>

<!-- taskbar -->
<div class="a" style="left:0;top:682px;width:1280px;height:38px;background:#0b0e16"></div>
<div class="a" style="left:45px;top:682px;width:322px;height:38px;background:#f2f2f2;border-top:1px solid #c4c4c4"></div>
<svg class="a" style="left:0;top:682px" width="1280" height="38" viewBox="0 682 1280 38">
 <g fill="#fff"><path d="M15,695 L21.5,694 V700.5 H15Z M22.5,693.8 L30,692.8 V700.5 H22.5Z M15,701.5 H21.5 V708 L15,707Z M22.5,701.5 H30 V709.2 L22.5,708.2Z"/></g>
 <circle cx="63.7" cy="701" r="8.2" fill="none" stroke="#111" stroke-width="2.4"/>
 <path d="M345,693 a3,3 0 0 1 6,0 v7 a3,3 0 0 1 -6,0z M343,699 a5,5 0 0 0 10,0 M348,704 v4 M345,708 h6" fill="none" stroke="#333" stroke-width="1.2"/>
 <g fill="none" stroke="#ddd" stroke-width="1.3"><rect x="384.5" y="695.5" width="9" height="10"/><path d="M382,693.5h14 M382,707.5h14 M397.5,694v2 M397.5,698v9"/></g>
 <path d="M429,703 C429,693 445,692 446,702 H433 C433.5,708 440,710 446,706.5 V710 C438,713 428,710 429,703Z M433,699 H442 C441,695 434,695 433,699Z" fill="#1e88e5"/>
 <path d="M473,695 h7 l2,2 h11 v12 h-20z" fill="#f0c850"/><rect x="473" y="699" width="20" height="10" fill="#f6d66a"/><rect x="480" y="701" width="6" height="5" fill="#3a8de0"/>
 <rect x="524" y="692" width="15" height="11" fill="#38a0e8" transform="skewY(8) translate(0,-74)"/>
 <path d="M519,707 l12,-3 l9,2 l-12,3z" fill="#e0e0e0"/>
 <circle cx="575" cy="701" r="10.5" fill="#db4437"/>
 <path d="M575,701 L566,706.2 A10.5,10.5 0 0 0 584,706.2Z" fill="#0f9d58"/>
 <path d="M575,701 L584.1,706.2 A10.5,10.5 0 0 0 575,690.5 Z" fill="#f4b400"/>
 <circle cx="575" cy="701" r="5" fill="#fff"/><circle cx="575" cy="701" r="3.8" fill="#4285f4"/>
 <rect x="599" y="682" width="45" height="38" fill="#3a3b41"/><rect x="599" y="682" width="45" height="1" fill="#8a8a90"/>
 <rect x="599" y="717" width="45" height="3" fill="#76b9ed"/>
 <defs><linearGradient id="sg" x1="0" y1="0" x2="0" y2="1"><stop offset="0" stop-color="#1488e0"/><stop offset="1" stop-color="#001490"/></linearGradient></defs>
 <rect x="610" y="690" width="22.5" height="22" fill="url(#sg)"/>
 <path d="M612,706 C613,697 617,697 620,702 C622,706 625,703 627,697 C628,694 630,694 631,697" fill="none" stroke="#4a8ad8" stroke-width="1"/>
 <rect x="648" y="717" width="38" height="3" fill="#76b9ed"/>
 <rect x="666.5" y="691.5" width="9" height="7" fill="#1a1aa0" stroke="#d8d8e8" stroke-width="1.3"/>
 <path d="M671,700 h7 l-2,2 h-6z" fill="#d0d0d0"/>
 <rect x="659" y="700.5" width="9" height="7" fill="#1a1aa0" stroke="#d8d8e8" stroke-width="1.3"/>
 <path d="M657,709 h10 l-1,2 h-9z" fill="#d0d0d0"/>
 <path d="M663,698 l6,-2 l-2,3 l5,-1 l-6,4 l2,-3z" fill="#f0e020"/>
 <g fill="none" stroke="#ddd" stroke-width="1.2">
  <circle cx="1021" cy="697" r="3"/><path d="M1016,708 a5,5 0 0 1 10,-1"/><circle cx="1016" cy="701" r="2.6"/><path d="M1011.5,709 a4.5,4.5 0 0 1 9,0"/>
  <path d="M1047,704 l6,-5 l6,5"/>
  <path d="M1068,694 v4 M1071,694 v4 M1067,698 h5 v3 l-2.5,2 v4"/><rect x="1074.5" y="698.5" width="9" height="7"/><path d="M1077,700 l4,4 M1081,700 l-4,4"/>
  <path d="M1093,707 a10,10 0 0 1 10,-10 M1096,707 a7,7 0 0 1 7,-7 M1099,707 a4,4 0 0 1 4,-4"/>
  <path d="M1112,698 h3 l4,-4 v14 l-4,-4 h-3z M1121.5,698.5 a4,4 0 0 1 0,5 M1124,696 a7,7 0 0 1 0,10"/>
  <path d="M1241.5,694.5 h15 v10 h-8 l-3,3 v-3 h-4z"/>
 </g>
 <circle cx="1102.5" cy="706.5" r="1.3" fill="#fff"/>
</svg>
<div class="t" style="left:83px;top:693px;font-size:14.5px;line-height:17px;color:#4a4a4a">Type here to search</div>
<div class="t" style="left:1136px;top:694px;font-size:12px;color:#eee">ENG</div>
<div class="t" style="left:1185px;top:686px;font-size:12px;color:#eee">11:26</div>
<div class="t" style="left:1170px;top:702px;font-size:12px;color:#eee">31/03/2019</div>
</body></html>
